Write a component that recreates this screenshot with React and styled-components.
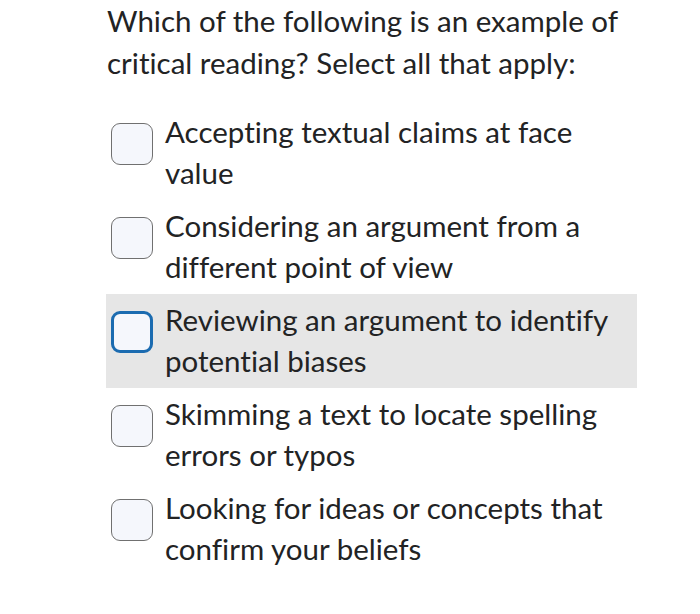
import React, { useState } from "react";
import styled, { createGlobalStyle } from "styled-components";

const GlobalStyle = createGlobalStyle`
  html, body {
    margin: 0;
    padding: 0;
    background: #ffffff;
  }
  body {
    font-family: Lato, "Open Sans", sans-serif;
    color: #222324;
    font-variant-ligatures: none;
  }
`;

const Wrapper = styled.div`
  width: 700px;
  min-height: 614px;
  padding: 0 63px 0 106px;
  box-sizing: border-box;
`;

const Question = styled.div`
  font-size: 29.5px;
  line-height: 42px;
  padding: 0 0 0 1px;
  margin-bottom: 22px;
`;

const List = styled.div`
  display: flex;
  flex-direction: column;
`;

const Option = styled.label`
  display: flex;
  align-items: flex-start;
  gap: 12px;
  padding: 5px 0 7px 5px;
  min-height: 82px;
  background: ${props => (props.$active ? "#e6e6e6" : "transparent")};
  cursor: pointer;
`;

const Box = styled.span`
  flex: none;
  width: 42px;
  height: 42px;
  margin-top: 12px;
  box-sizing: border-box;
  border-radius: 9px;
  background: #f5f7fc;
  border: ${props => (props.$active ? "3px solid #1b6bb0" : "1.5px solid #707070")};
`;

const Label = styled.span`
  font-size: 29.5px;
  line-height: 41px;
`;

const options = [
  "Accepting textual claims at face value",
  "Considering an argument from a different point of view",
  "Reviewing an argument to identify potential biases",
  "Skimming a text to locate spelling errors or typos",
  "Looking for ideas or concepts that confirm your beliefs",
];

export default function App() {
  const [active] = useState(2);
  return (
    <>
      <GlobalStyle />
      <Wrapper>
        <Question>
          Which of the following is an example of critical reading? Select all that apply:
        </Question>
        <List>
          {options.map((text, i) => (
            <Option key={text} $active={i === active}>
              <Box $active={i === active} />
              <Label>{text}</Label>
            </Option>
          ))}
        </List>
      </Wrapper>
    </>
  );
}
